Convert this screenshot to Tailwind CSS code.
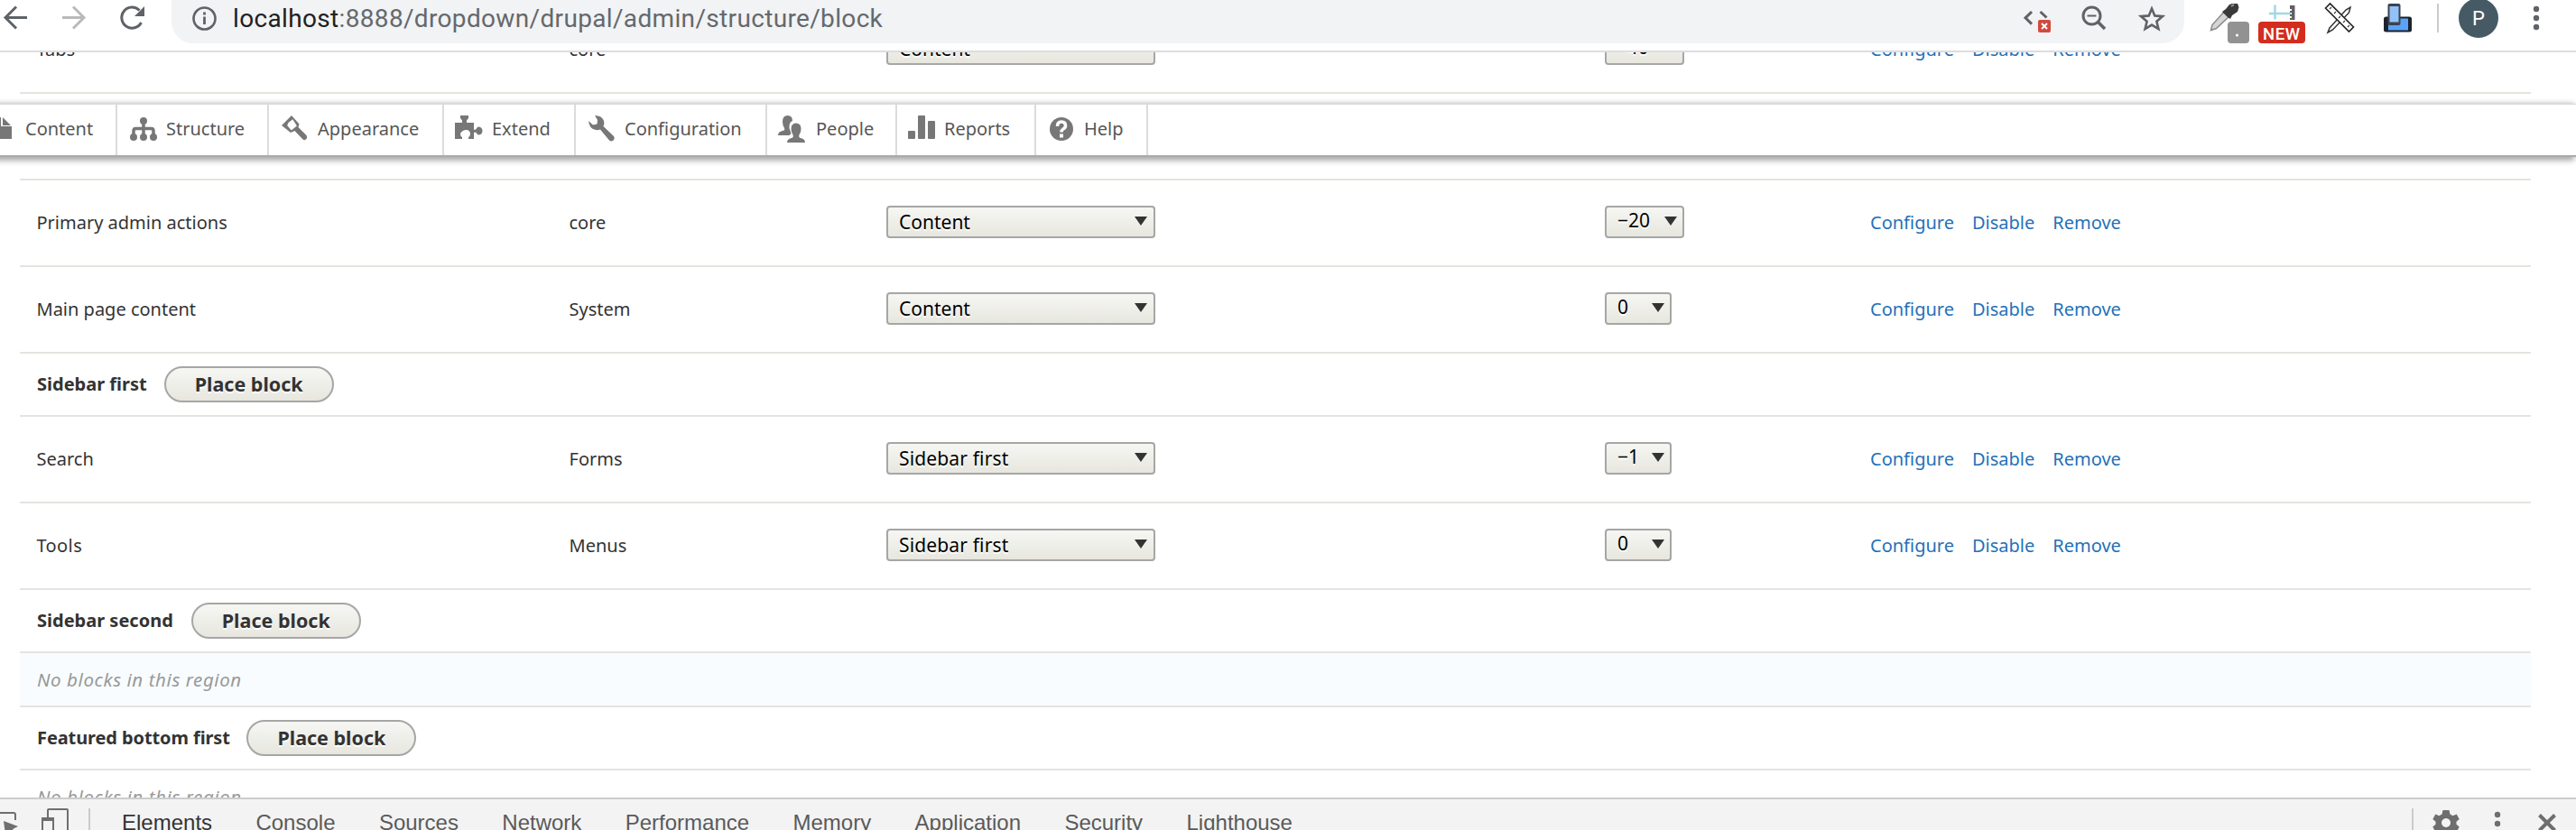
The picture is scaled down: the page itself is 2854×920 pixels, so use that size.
<!DOCTYPE html>
<html lang="en">

<head>
    <meta charset="UTF-8">
    <meta name="viewport" content="width=device-width, initial-scale=1.0">
    <title>Block layout</title>
    <script src="https://cdn.jsdelivr.net/npm/@tailwindcss/browser@4"></script>
</head>

<body class="w-[2854px] h-[920px] overflow-hidden flex flex-col bg-white font-['Noto_Sans',sans-serif]">

    <!-- Browser bar -->
    <header class="relative z-20 h-[58px] shrink-0 flex items-start bg-white border-b-2 border-[#dcdce1]">
        <svg class="w-[190px] h-10 shrink-0" viewBox="0 0 190 40" fill="none" stroke="#5f6368" stroke-width="3">
            <path d="M30 19.500H7M18 7.500L6 19.500l12 12" />
            <path d="M69 19.500H92M81 7.500l12 12-12 12" stroke="#bababc" />
            <path d="M156.500 25a11.500 11.500 0 1 1-2-13.500" />
            <path d="M160 7v11h-11z" fill="#5f6368" stroke="none" />
        </svg>
        <div class="w-[2230px] h-12 shrink-0 flex items-start bg-[#f1f3f4] rounded-b-[24px]">
            <svg class="w-[68px] h-10 shrink-0" viewBox="190 0 68 40" fill="none" stroke="#5f6368" stroke-width="2.600">
                <circle cx="226.500" cy="20.500" r="12" />
                <path d="M226.500 18.500v8.500M226.500 13.500v3" stroke-width="2.800" />
            </svg>
            <p class="h-10 leading-[41px] grow text-[28px] tracking-[0.34px] font-['Roboto',sans-serif] text-[#65686c]"><span class="text-[#202124]">localhost</span>:8888/dropdown/drupal/admin/structure/block</p>
            <svg class="w-[190px] h-10 shrink-0" viewBox="2230 0 190 40" fill="none" stroke="#5f6368" stroke-width="3">
                <path d="M2251 13l-7 6.800 7 6.800M2260.500 13l7 6.500" />
                <rect x="2258" y="22" width="14" height="14" rx="2" fill="#d04b3e" stroke="none" />
                <path d="M2262 26l6 6M2268 26l-6 6" stroke="#fff" stroke-width="2" />
                <circle cx="2317.500" cy="17.500" r="9.500" />
                <path d="M2312.500 17.500h10" stroke-width="2" />
                <path d="M2324.500 24.500l7.500 7.500" stroke-width="3.600" />
                <path d="M2384 9.500l3.300 7.900 8.700.7-6.600 5.700 2 8.300-7.400-4.500-7.400 4.500 2-8.300-6.600-5.700 8.700-.7z" stroke-width="2.600" />
            </svg>
        </div>
        <svg class="w-[434px] h-12 shrink-0" viewBox="2420 0 434 48">
            <!-- Eyedropper -->
            <path d="M2449.500 33.500l1.500-6 14-15.500 5.500 5.500-15 14z" fill="#d5d5d5" stroke="#8a8a8a" stroke-width="1.500" />
            <path d="M2462 13l4-3 4-5 3-1h6l1.500 4-1.500 5-6 4-2 4-3-2z" fill="#3a3a3a" />
            <path d="M2472 7l3-2" stroke="#999" stroke-width="2" />
            <rect x="2468" y="24" width="24" height="24" rx="4" fill="#929292" />
            <circle cx="2478.500" cy="39" r="1.600" fill="#fff" />
            <!-- Page ruler -->
            <path d="M2520.500 5.500v16M2514 15h24" stroke="#a2d8e4" stroke-width="2.500" />
            <path d="M2537 6h5.500v16h-5.500v-2h2v-2h-2v-2h2v-2h-2v-2h2v-2h-2z" fill="#606060" />
            <rect x="2502" y="24" width="52" height="24" rx="4" fill="#d32d1f" />
            <text x="2507" y="44" textLength="41" font-size="18.500" font-weight="500" font-family="Roboto, sans-serif" fill="#fff">NEW</text>
            <!-- Ruler and pencil -->
            <path d="M2581 31l18-20 5-3-1.500 6-18 19-5.500 3z" fill="#fff" stroke="#333" stroke-width="1.500" />
            <path d="M2576.500 9l5-5 26 26-5 5z" fill="#fff" stroke="#222" stroke-width="1.600" />
            <path d="M2583 8l-2 2M2588 13l-2 2M2593 18l-2 2M2598 23l-2 2M2603 28l-2 2" stroke="#444" stroke-width="1.300" />
            <!-- Responsive devices -->
            <rect x="2641" y="18.500" width="31" height="17" rx="2.500" fill="#1d222b" />
            <rect x="2646" y="20.500" width="22" height="13" fill="#5aa2f6" />
            <rect x="2645.500" y="4" width="14" height="24" rx="2" fill="#3b4350" />
            <rect x="2647.500" y="7" width="10" height="17.500" fill="#92c2f8" />
            <rect x="2700" y="4" width="2" height="32" fill="#cbcbcb" />
            <circle cx="2746" cy="20" r="22" fill="#455a64" />
            <text x="2746" y="28" text-anchor="middle" font-size="22" font-family="Roboto, sans-serif" fill="#fff">P</text>
            <g fill="#5f6368">
                <circle cx="2810" cy="10" r="3.200" />
                <circle cx="2810" cy="20" r="3.200" />
                <circle cx="2810" cy="30" r="3.200" />
            </g>
        </svg>
    </header>

    <main class="relative h-[826px] shrink-0 overflow-hidden">

        <!-- Admin toolbar, fixed over the page -->
        <nav class="absolute z-10 top-[57px] left-0 w-[2854px] h-[59px] flex bg-white border-t border-t-[#dadada] border-b-2 border-b-[#aaa] text-[20px] text-[#565656] shadow-[-4px_2px_6px_2px_rgba(0,0,0,0.333)]">
            <a class="w-[130px] shrink-0 border-r-2 border-[#dcdcdc] flex items-center gap-[2px] pb-[2px]">
                <svg class="w-[26px] h-8 mt-[2px] shrink-0" viewBox="0 0 26 32" fill="#777">
                    <path d="M0 2h1v10h12v14H0zM3 2l9 9H3z" />
                </svg>
                Content
            </a>
            <a class="w-[168px] shrink-0 border-r-2 border-[#dcdcdc] flex items-center gap-[10px] pl-3 pb-[2px]">
                <svg class="w-8 h-8 mt-[2px]" viewBox="0 0 32 32" fill="#777">
                    <circle cx="17" cy="6" r="4" />
                    <circle cx="6" cy="24" r="4" />
                    <circle cx="17" cy="24" r="4" />
                    <circle cx="28" cy="24" r="4" />
                    <path d="M17 6v17M6 23v-6q0-2.500 2.500-2.500h17q2.500 0 2.500 2.500v6" fill="none" stroke="#777" stroke-width="3.500" />
                </svg>
                Structure
            </a>
            <a class="w-[194px] shrink-0 border-r-2 border-[#dcdcdc] flex items-center gap-[10px] pl-3 pb-[2px]">
                <svg class="w-8 h-8 mt-[2px]" viewBox="0 0 32 32" fill="#777">
                    <path d="M13 0l8.500 9.500-1 3.500 9 9q1.500 2 0 4t-4 .5l-9-9.500-4.500 2L2 11z" />
                    <path d="M9.500 8l-1.300 3 4.500 5.600 6.200-5.200-4.600-7.200z" fill="#fff" />
                </svg>
                Appearance
            </a>
            <a class="w-[146px] shrink-0 border-r-2 border-[#dcdcdc] flex items-center gap-[9px] pl-3 pb-[2px]">
                <svg class="w-8 h-8 mt-[2px]" viewBox="0 0 32 32" fill="#777">
                    <path d="M6 0h9v3l-2 2.500V8h8v8l2-.5 2.500-3q5 0 5 4.500t-5 4.500l-2.500-3-2 .5v7h-6v-2q2-1 2-4-.5-4-4.500-4T6 20q0 3 2 4v2H0V8h8V5.500L6 3z" />
                </svg>
                Extend
            </a>
            <a class="w-[212px] shrink-0 border-r-2 border-[#dcdcdc] flex items-center gap-[10px] pl-3 pb-[2px]">
                <svg class="w-8 h-8 mt-[2px]" viewBox="0 0 32 32" fill="#777">
                    <path d="M9 0q8 0 10 6 1 3-.5 6L30 23q1.500 2.500-.5 4.500t-4.500 0L15 15.500q-4 1.500-8-.5T2 6l5 4.500 4.500-1L12 5z" />
                </svg>
                Configuration
            </a>
            <a class="w-[144px] shrink-0 border-r-2 border-[#dcdcdc] flex items-center gap-[10px] pl-3 pb-[2px]">
                <svg class="w-8 h-8 mt-[2px]" viewBox="0 0 32 32" fill="#777">
                    <path d="M0 22q0-4 5-5 3-.5 2-3-2-3-2-7 0-7 5.500-7T16 6q-4 1.500-3.500 8l2 6-2 2z" />
                    <path d="M10 30q0-4 5-5 2.500-.5 1.500-3.500-2-3-2-6.500 0-6.500 5.500-6.500t5.500 6.500q0 3.500-2 6.500-1 3 1.500 3.500 5 1 5 5z" />
                </svg>
                People
            </a>
            <a class="w-[154px] shrink-0 border-r-2 border-[#dcdcdc] flex items-center gap-[8px] pl-3 pb-[2px]">
                <svg class="w-8 h-8 mt-[2px]" viewBox="0 0 32 32" fill="#777">
                    <rect x="0" y="17" width="8" height="9" rx="1" />
                    <rect x="11" y="0" width="8" height="26" rx="1" />
                    <rect x="22" y="6" width="8" height="20" rx="1" />
                </svg>
                Reports
            </a>
            <a class="w-[124px] shrink-0 border-r-2 border-[#dcdcdc] flex items-center gap-[8px] pl-[13px] pb-[2px]">
                <svg class="w-8 h-8 mt-[2px]" viewBox="0 0 32 32">
                    <circle cx="15" cy="15" r="13" fill="#777" />
                    <path d="M10.500 12q0-5 4.500-5t4.500 4.500q0 2-2.500 3.500-2 1.200-2 3.500" fill="none" stroke="#fff" stroke-width="3.600" />
                    <rect x="13" y="20.500" width="4" height="4" fill="#fff" />
                </svg>
                Help
            </a>
        </nav>

        <!-- Block table -->
        <div class="-mt-[52px] ml-[22px] w-[2782px] text-[20px] text-[#333]">
            <div class="h-24 border-t-2 border-[#e4e4df] flex items-center pl-[18.5px]">
                <span class="w-[590px]">Tabs</span>
                <span class="w-[351.5px]">core</span>
                <div class="w-[796px]">
                    <div class="w-[298px] h-9 mb-[2px] flex items-center justify-between border-2 border-[#a6a6a6] rounded-[4px] bg-linear-to-b from-[#f6f6f3] to-[#e7e7df] pl-3 pr-[7px] text-[21px] text-black"><span class="mt-[2px] text-shadow-[0_2px_0_#fff]">Content</span>
                        <svg class="w-[14px] h-[10px] -mt-[2px]" viewBox="0 0 14 10" fill="#333"><path d="M0 0h14L7 10z" /></svg>
                    </div>
                </div>
                <div class="w-[294px]">
                    <div class="w-[88px] h-9 mb-[2px] flex items-center justify-between border-2 border-[#a6a6a6] rounded-[4px] bg-linear-to-b from-[#f6f6f3] to-[#e7e7df] pl-3 pr-[6px] text-[21px] text-black"><span class="-mt-[2px] text-shadow-[0_2px_0_#fff]">–40</span>
                        <svg class="w-[14px] h-[10px] -mt-[2px]" viewBox="0 0 14 10" fill="#333"><path d="M0 0h14L7 10z" /></svg>
                    </div>
                </div>
                <div class="flex gap-5 text-[#2471b8]"><a>Configure</a><a>Disable</a><a>Remove</a></div>
            </div>
            <div class="h-24 border-t-2 border-[#e4e4df]"></div>
            <div class="h-24 border-t-2 border-[#e4e4df] flex items-center pl-[18.5px]">
                <span class="w-[590px]">Primary admin actions</span>
                <span class="w-[351.5px]">core</span>
                <div class="w-[796px]">
                    <div class="w-[298px] h-9 mb-[2px] flex items-center justify-between border-2 border-[#a6a6a6] rounded-[4px] bg-linear-to-b from-[#f6f6f3] to-[#e7e7df] pl-3 pr-[7px] text-[21px] text-black"><span class="mt-[2px] text-shadow-[0_2px_0_#fff]">Content</span>
                        <svg class="w-[14px] h-[10px] -mt-[2px]" viewBox="0 0 14 10" fill="#333"><path d="M0 0h14L7 10z" /></svg>
                    </div>
                </div>
                <div class="w-[294px]">
                    <div class="w-[88px] h-9 mb-[2px] flex items-center justify-between border-2 border-[#a6a6a6] rounded-[4px] bg-linear-to-b from-[#f6f6f3] to-[#e7e7df] pl-3 pr-[6px] text-[21px] text-black"><span class="-mt-[2px] text-shadow-[0_2px_0_#fff]">−20</span>
                        <svg class="w-[14px] h-[10px] -mt-[2px]" viewBox="0 0 14 10" fill="#333"><path d="M0 0h14L7 10z" /></svg>
                    </div>
                </div>
                <div class="flex gap-5 text-[#2471b8]"><a>Configure</a><a>Disable</a><a>Remove</a></div>
            </div>
            <div class="h-24 border-t-2 border-[#e4e4df] flex items-center pl-[18.5px]">
                <span class="w-[590px]">Main page content</span>
                <span class="w-[351.5px]">System</span>
                <div class="w-[796px]">
                    <div class="w-[298px] h-9 mb-[2px] flex items-center justify-between border-2 border-[#a6a6a6] rounded-[4px] bg-linear-to-b from-[#f6f6f3] to-[#e7e7df] pl-3 pr-[7px] text-[21px] text-black"><span class="mt-[2px] text-shadow-[0_2px_0_#fff]">Content</span>
                        <svg class="w-[14px] h-[10px] -mt-[2px]" viewBox="0 0 14 10" fill="#333"><path d="M0 0h14L7 10z" /></svg>
                    </div>
                </div>
                <div class="w-[294px]">
                    <div class="w-[74px] h-9 mb-[2px] flex items-center justify-between border-2 border-[#a6a6a6] rounded-[4px] bg-linear-to-b from-[#f6f6f3] to-[#e7e7df] pl-3 pr-[6px] text-[21px] text-black"><span class="-mt-[2px] text-shadow-[0_2px_0_#fff]">0</span>
                        <svg class="w-[14px] h-[10px] -mt-[2px]" viewBox="0 0 14 10" fill="#333"><path d="M0 0h14L7 10z" /></svg>
                    </div>
                </div>
                <div class="flex gap-5 text-[#2471b8]"><a>Configure</a><a>Disable</a><a>Remove</a></div>
            </div>

            <!-- Region: Sidebar first -->
            <div class="h-[70px] border-t-2 border-[#e4e4df] flex items-center gap-[19px] pl-[19px] font-bold">
                Sidebar first
                <button class="w-[188px] h-10 border-2 border-[#a6a6a6] rounded-[20px] bg-linear-to-b from-[#f6f6f3] to-[#e7e7df] text-[21.5px] leading-none text-shadow-[0_2px_0_#fff]">Place block</button>
            </div>
            <div class="h-24 border-t-2 border-[#e4e4df] flex items-center pl-[18.5px]">
                <span class="w-[590px]">Search</span>
                <span class="w-[351.5px]">Forms</span>
                <div class="w-[796px]">
                    <div class="w-[298px] h-9 mb-[2px] flex items-center justify-between border-2 border-[#a6a6a6] rounded-[4px] bg-linear-to-b from-[#f6f6f3] to-[#e7e7df] pl-3 pr-[7px] text-[21px] text-black"><span class="mt-[2px] tracking-[0.15px] text-shadow-[0_2px_0_#fff]">Sidebar first</span>
                        <svg class="w-[14px] h-[10px] -mt-[2px]" viewBox="0 0 14 10" fill="#333"><path d="M0 0h14L7 10z" /></svg>
                    </div>
                </div>
                <div class="w-[294px]">
                    <div class="w-[74px] h-9 mb-[2px] flex items-center justify-between border-2 border-[#a6a6a6] rounded-[4px] bg-linear-to-b from-[#f6f6f3] to-[#e7e7df] pl-3 pr-[6px] text-[21px] text-black"><span class="-mt-[2px] text-shadow-[0_2px_0_#fff]">−1</span>
                        <svg class="w-[14px] h-[10px] -mt-[2px]" viewBox="0 0 14 10" fill="#333"><path d="M0 0h14L7 10z" /></svg>
                    </div>
                </div>
                <div class="flex gap-5 text-[#2471b8]"><a>Configure</a><a>Disable</a><a>Remove</a></div>
            </div>
            <div class="h-24 border-t-2 border-[#e4e4df] flex items-center pl-[18.5px]">
                <span class="w-[590px] tracking-[0.4px]">Tools</span>
                <span class="w-[351.5px]">Menus</span>
                <div class="w-[796px]">
                    <div class="w-[298px] h-9 mb-[2px] flex items-center justify-between border-2 border-[#a6a6a6] rounded-[4px] bg-linear-to-b from-[#f6f6f3] to-[#e7e7df] pl-3 pr-[7px] text-[21px] text-black"><span class="mt-[2px] tracking-[0.15px] text-shadow-[0_2px_0_#fff]">Sidebar first</span>
                        <svg class="w-[14px] h-[10px] -mt-[2px]" viewBox="0 0 14 10" fill="#333"><path d="M0 0h14L7 10z" /></svg>
                    </div>
                </div>
                <div class="w-[294px]">
                    <div class="w-[74px] h-9 mb-[2px] flex items-center justify-between border-2 border-[#a6a6a6] rounded-[4px] bg-linear-to-b from-[#f6f6f3] to-[#e7e7df] pl-3 pr-[6px] text-[21px] text-black"><span class="-mt-[2px] text-shadow-[0_2px_0_#fff]">0</span>
                        <svg class="w-[14px] h-[10px] -mt-[2px]" viewBox="0 0 14 10" fill="#333"><path d="M0 0h14L7 10z" /></svg>
                    </div>
                </div>
                <div class="flex gap-5 text-[#2471b8]"><a>Configure</a><a>Disable</a><a>Remove</a></div>
            </div>

            <!-- Region: Sidebar second -->
            <div class="h-[70px] border-t-2 border-[#e4e4df] flex items-center gap-5 pl-[19px] font-bold">
                Sidebar second
                <button class="w-[188px] h-10 border-2 border-[#a6a6a6] rounded-[20px] bg-linear-to-b from-[#f6f6f3] to-[#e7e7df] text-[21.5px] leading-none text-shadow-[0_2px_0_#fff]">Place block</button>
            </div>
            <div class="h-[60px] border-t-2 border-[#e4e4df] bg-[#f8fcff] flex items-center pl-[19px] italic text-[20.5px] text-[#999] tracking-[0.58px]">No blocks in this region</div>

            <!-- Region: Featured bottom first -->
            <div class="h-[70px] border-t-2 border-[#e4e4df] flex items-center gap-[18.5px] pl-[19px] font-bold tracking-[-0.1px]">
                Featured bottom first
                <button class="w-[188px] h-10 border-2 border-[#a6a6a6] rounded-[20px] bg-linear-to-b from-[#f6f6f3] to-[#e7e7df] text-[21.5px] leading-none tracking-normal text-shadow-[0_2px_0_#fff]">Place block</button>
            </div>
            <div class="h-[60px] border-t-2 border-[#e4e4df] flex items-center pl-[19px] italic text-[20.5px] text-[#999] tracking-[0.58px]">No blocks in this region</div>
        </div>
    </main>

    <!-- DevTools tab strip -->
    <footer class="h-9 shrink-0 overflow-hidden bg-[#f3f3f3] border-t-2 border-[#cdcdcd]">
        <div class="h-[52px] flex items-center font-['Liberation_Sans',sans-serif] text-[24px] text-[#5a5a5a]">
            <svg class="w-[135px] h-[52px] shrink-0" viewBox="0 886 135 52" fill="none" stroke="#6e6e6e" stroke-width="2">
                <path d="M0 901h15q2 0 2 2v6" />
                <path d="M4 910l16 6-6 3 4 7-3 2-5-7-4 4z" fill="#6e6e6e" stroke="none" />
                <path d="M53 906v-8q0-1 1-1h20q1 0 1 1v34" />
                <path d="M47 932v-24h12v24" />
                <path d="M46 908h14" stroke-width="4" />
                <path d="M99 896v36" stroke="#cbcbcb" />
            </svg>
            <div class="grow flex gap-[48.400px]">
                <span class="text-[#333]">Elements</span>
                <span>Console</span>
                <span>Sources</span>
                <span>Network</span>
                <span>Performance</span>
                <span>Memory</span>
                <span>Application</span>
                <span>Security</span>
                <span>Lighthouse</span>
            </div>
            <svg class="w-[190px] h-[52px] shrink-0" viewBox="2664 886 190 52" fill="#6e6e6e">
                <rect x="2672" y="896" width="2" height="36" fill="#cbcbcb" />
                <path fill-rule="evenodd" d="M2706.500 898h7l1 4.500 3 1.700 4.200-1.700 3 5.500-3.200 2.800v3l3.200 2.800-3 5.500-4.200-1.700-3 1.700-1 4h-7l-1-4-3-1.700-4.200 1.700-3-5.500 3.200-2.800v-3l-3.200-2.800 3-5.500 4.200 1.700 3-1.700zM2710 907a5 5 0 1 0 .01 0z" />
                <circle cx="2767" cy="903" r="3.200" />
                <circle cx="2767" cy="913" r="3.200" />
                <circle cx="2767" cy="923" r="3.200" />
                <path d="M2813.500 903.500l17 17M2830.500 903.500l-17 17" stroke="#6e6e6e" stroke-width="4" />
            </svg>
        </div>
    </footer>
</body>

</html>
